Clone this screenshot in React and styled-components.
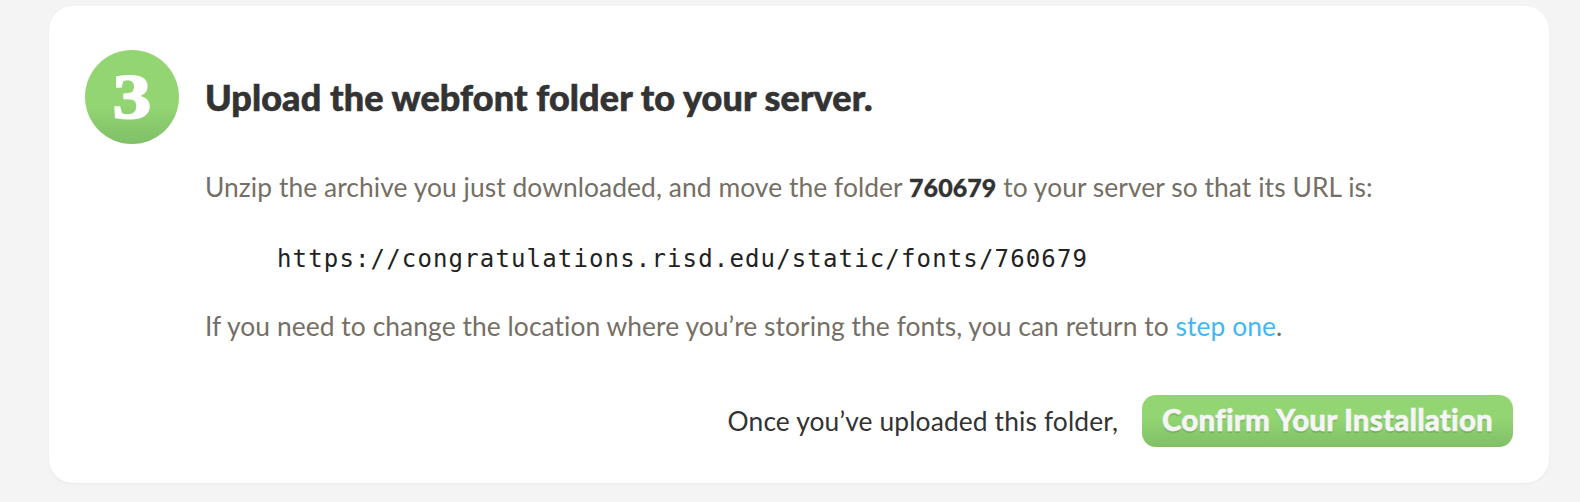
import React from "react";
import styled, { createGlobalStyle } from "styled-components";

const GlobalStyle = createGlobalStyle`
  html, body {
    margin: 0;
    background: #f4f4f4;
  }
`;

const Page = styled.div`
  height: 502px;
  padding: 6px 31px 0 49px;
  box-sizing: border-box;
  overflow: hidden;
`;

const Card = styled.section`
  height: 477px;
  box-sizing: border-box;
  padding: 44px 36px 0;
  background: #fff;
  border-radius: 24px;
  box-shadow: 0 1px 3px rgba(0, 0, 0, 0.05);
  font-family: "Lato", sans-serif;
`;

const Header = styled.header`
  display: flex;
  align-items: center;
  gap: 26px;
`;

const StepBadge = styled.div`
  width: 94px;
  height: 94px;
  border-radius: 50%;
  display: flex;
  align-items: center;
  justify-content: center;
  background: linear-gradient(#92d572 0%, #92d572 60%, #80bf68 100%);
`;

const StepNumber = styled.span`
  display: inline-block;
  transform: scaleX(1.2);
  color: #fff;
  font-family: "Liberation Serif", serif;
  font-weight: 700;
  font-size: 64px;
  line-height: 1;
  -webkit-text-stroke: 2px #fff;
`;

const Title = styled.h2`
  margin: 0;
  font-size: 36px;
  font-weight: 900;
  letter-spacing: 0.1px;
  color: #333;
  -webkit-text-stroke: 0.6px #333;
`;

const Body = styled.div`
  margin: 25px 0 0 120px;
`;

const Paragraph = styled.p`
  margin: 0;
  font-size: 26.4px;
  letter-spacing: 0.06px;
  line-height: 36px;
  color: #756f66;
`;

const Strong = styled.strong`
  font-size: 25px;
  font-weight: 900;
  color: #333;
  -webkit-text-stroke: 0.3px #333;
`;

const StepLink = styled.a`
  color: #3fb8f5;
  text-decoration: none;
`;

const Url = styled.pre`
  margin: 36px 0 31px 72px;
  font-family: "DejaVu Sans Mono", monospace;
  font-size: 24px;
  letter-spacing: 1.15px;
  line-height: 36px;
  color: #222;
`;

const Footer = styled.footer`
  display: flex;
  justify-content: flex-end;
  align-items: center;
  gap: 24px;
  margin-top: 51px;
`;

const FooterText = styled.span`
  font-size: 26.4px;
  letter-spacing: 0.12px;
  color: #333;
`;

const ConfirmButton = styled.a`
  display: block;
  width: 371px;
  height: 52px;
  line-height: 50px;
  text-align: center;
  border-radius: 14px;
  background: linear-gradient(#92d572 0%, #92d572 45%, #80bf68 100%);
  color: #f5f5f5;
  font-size: 29.5px;
  font-weight: 900;
  letter-spacing: 0.15px;
  -webkit-text-stroke: 0.5px #f5f5f5;
  text-shadow: 0 2px 1px rgba(0, 0, 0, 0.15);
`;

export default function App() {
  return (
    <Page>
      <GlobalStyle />
      <Card>
        <Header>
          <StepBadge>
            <StepNumber>3</StepNumber>
          </StepBadge>
          <Title>Upload the webfont folder to your server.</Title>
        </Header>
        <Body>
          <Paragraph>
            Unzip the archive you just downloaded, and move the folder <Strong>760679</Strong> to your server so that its URL is:
          </Paragraph>
          <Url>https://congratulations.risd.edu/static/fonts/760679</Url>
          <Paragraph>
            If you need to change the location where you’re storing the fonts, you can return to <StepLink href="#">step one</StepLink>.
          </Paragraph>
        </Body>
        <Footer>
          <FooterText>Once you’ve uploaded this folder,</FooterText>
          <ConfirmButton>Confirm Your Installation</ConfirmButton>
        </Footer>
      </Card>
    </Page>
  );
}
